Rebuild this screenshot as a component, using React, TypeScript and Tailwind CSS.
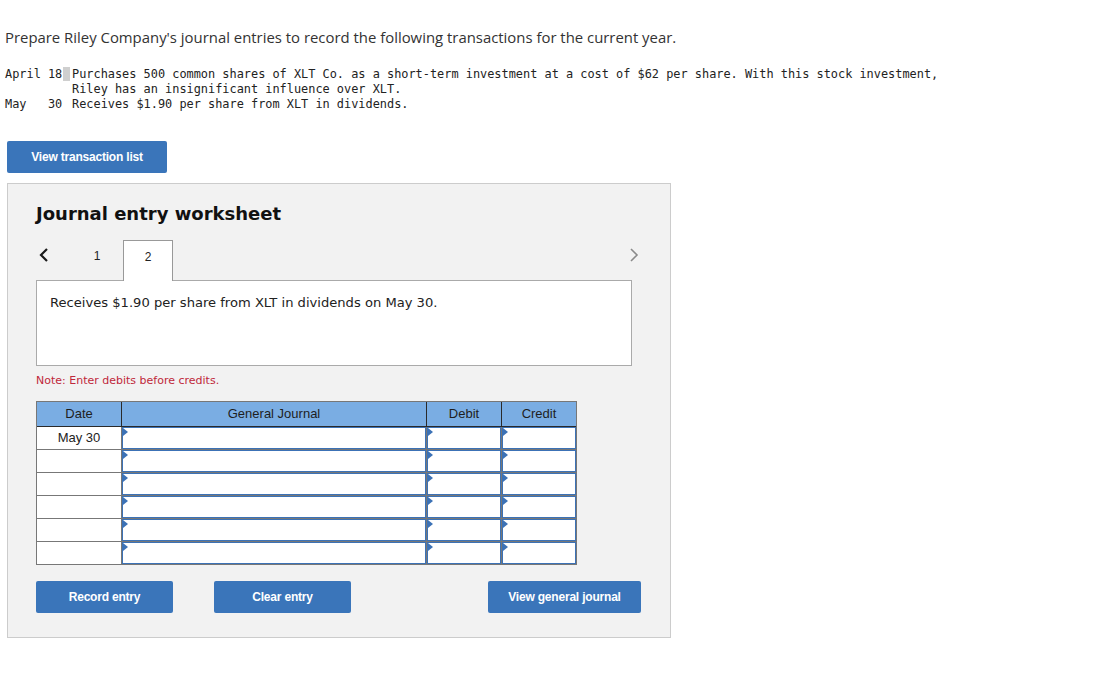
import React from "react";

const rows = ["May 30", "", "", "", "", ""];

function Chevron({ dir, color }: { dir: "left" | "right"; color: string }) {
  return (
    <svg width="12" height="16" viewBox="0 0 12 16" fill="none">
      <path
        d={dir === "left" ? "M9 2 L3 8 L9 14" : "M3 2 L9 8 L3 14"}
        stroke={color}
        strokeWidth={dir === "left" ? 2.2 : 1.6}
        strokeLinecap="butt"
        strokeLinejoin="miter"
      />
    </svg>
  );
}

function InputCell() {
  return (
    <div className="relative h-[22px] bg-white border border-[#3c72b6]">
      <span className="absolute left-0 top-0 w-0 h-0 border-y-[4px] border-y-transparent border-l-[5px] border-l-[#3c72b6]" />
    </div>
  );
}

function Btn({ label, w }: { label: string; w: string }) {
  return (
    <button
      className={`${w} h-[32px] rounded-[2px] bg-[#3a75ba] text-white text-[12px] font-bold font-['Liberation_Sans',Arial,sans-serif] tracking-[-0.2px]`}
    >
      {label}
    </button>
  );
}

export default function App() {
  return (
    <div className="w-[1094px] h-[692px] bg-white font-['Liberation_Sans',Arial,sans-serif] text-[#333]">
      <p className="pt-[28px] pl-[5px] text-[14.9px] leading-[18px] text-[#333] font-['Open_Sans',sans-serif]">
        Prepare Riley Company's journal entries to record the following transactions for the current year.
      </p>

      {/* transaction list */}
      <div className="mt-[21px] pl-[5px] font-['DejaVu_Sans_Mono',monospace] text-[11.9px] leading-[15px] text-[#222] whitespace-pre">
        <div className="flex">
          <span className="w-[67px] shrink-0">
            April 18
            <span className="inline-block w-[7px] h-[14px] ml-px bg-[#cfcfcf] align-[-3px]" />
          </span>
          <span>Purchases 500 common shares of XLT Co. as a short-term investment at a cost of $62 per share. With this stock investment,</span>
        </div>
        <div className="flex">
          <span className="w-[67px] shrink-0" />
          <span>Riley has an insignificant influence over XLT.</span>
        </div>
        <div className="flex">
          <span className="w-[67px] shrink-0">May   30</span>
          <span>Receives $1.90 per share from XLT in dividends.</span>
        </div>
      </div>

      <div className="pl-[7px] mt-[29px]">
        <Btn label="View transaction list" w="w-[160px] h-[31px]" />
      </div>

      {/* worksheet panel */}
      <div className="ml-[7px] mt-[10px] w-[664px] h-[455px] border border-[#cccccc] bg-[#f2f2f2] pl-[28px]">
        <h2 className="pt-[19px] text-[18px] leading-[22px] font-bold text-[#111] font-['DejaVu_Sans',Verdana,sans-serif]">
          Journal entry worksheet
        </h2>

        <div className="mt-[15px] w-[596px] flex items-start relative z-10">
          <div className="w-[38px] h-[41px] pt-[7px] pl-[2px]">
            <Chevron dir="left" color="#1a1a1a" />
          </div>
          <div className="w-[46px] h-[41px] pt-[9px] text-center text-[12px] leading-[14px] text-[#222]">1</div>
          <div className="ml-[3px] w-[50px] h-[41px] pt-[9px] text-center text-[12px] leading-[14px] text-[#222] bg-white border border-b-0 border-[#999]">
            2
          </div>
          <div className="ml-auto -mr-[8px] pt-[7px]">
            <Chevron dir="right" color="#8a8a8a" />
          </div>
        </div>

        <div className="-mt-px w-[596px] h-[86px] bg-white border border-[#aaaaaa] pl-[13px] pt-[14px]">
          <p className="text-[13.1px] leading-[16px] text-[#222] font-['DejaVu_Sans',Verdana,sans-serif]">
            Receives $1.90 per share from XLT in dividends on May 30.
          </p>
        </div>

        <p className="mt-[8px] text-[11px] leading-[14px] text-[#c0283a] font-['DejaVu_Sans',Verdana,sans-serif]">
          Note: Enter debits before credits.
        </p>

        {/* journal grid */}
        <div className="mt-[13px] w-[541px] border border-[#777]">
          <div className="grid grid-cols-[84px_304px_74px_74px] gap-x-px bg-[#2a2a2a] border-b border-[#2a2a2a]">
            {["Date", "General Journal", "Debit", "Credit"].map((h) => (
              <div key={h} className="h-[24px] bg-[#7aade3] text-center text-[13px] leading-[23px] text-[#1e1e1e]">
                {h}
              </div>
            ))}
          </div>
          <div className="grid grid-cols-[84px_304px_74px_74px] gap-px bg-[#777]">
            {rows.map((d, i) => (
              <React.Fragment key={i}>
                <div className="h-[22px] bg-white text-center text-[13px] leading-[21px] text-[#222]">{d}</div>
                <InputCell />
                <InputCell />
                <InputCell />
              </React.Fragment>
            ))}
          </div>
        </div>

        <div className="mt-[16px] flex">
          <Btn label="Record entry" w="w-[137px]" />
          <div className="ml-[41px]">
            <Btn label="Clear entry" w="w-[137px]" />
          </div>
          <div className="ml-[137px]">
            <Btn label="View general journal" w="w-[153px]" />
          </div>
        </div>
      </div>
    </div>
  );
}
